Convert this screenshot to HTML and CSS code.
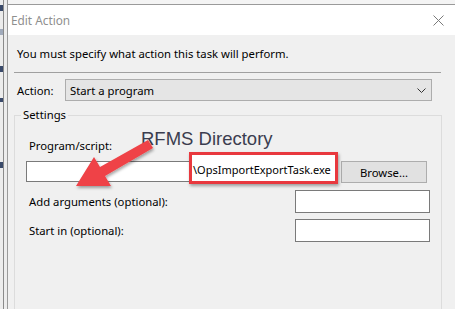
FILE: index.html
```html
<!DOCTYPE html>
<html lang="en">
<head>
  <meta charset="UTF-8" />
  <title>Edit Action</title>
  <link rel="stylesheet" href="styles.css">
</head>
<body>
  <div class="screen">
    <div class="backdrop">
      <i class="mark m1"></i>
      <i class="mark m2"></i>
      <i class="mark m3"></i>
      <i class="mark m4"></i>
      <i class="mark m5"></i>
    </div>

    <div class="dialog">
      <div class="titlebar">
        <span class="title">Edit Action</span>
        <svg class="close" width="11" height="11" viewBox="0 0 11 11">
          <path d="M0.5 0.5 L10.5 10.5 M10.5 0.5 L0.5 10.5" stroke="#7a7a7a" stroke-width="1" fill="none" />
        </svg>
      </div>

      <div class="dialog-body">
        <p class="intro">You must specify what action this task will perform.</p>
        <div class="separator"></div>

        <div class="action-row">
          <label class="action-label">Action:</label>
          <div class="combo">
            <span>Start a program</span>
            <svg width="9" height="5" viewBox="0 0 9 5">
              <path d="M0.5 0.5 L4.5 4.5 L8.5 0.5" stroke="#333" stroke-width="1" fill="none" />
            </svg>
          </div>
        </div>

        <fieldset class="settings">
          <legend>Settings</legend>
          <label class="field-label prog-label">Program/script:</label>
          <div class="prog-row">
            <input type="text" class="prog-input" />
            <button class="browse">Browse...</button>
          </div>
          <div class="opt-row">
            <label class="field-label">Add arguments (optional):</label>
            <input type="text" class="opt-input" />
          </div>
          <div class="opt-row">
            <label class="field-label">Start in (optional):</label>
            <input type="text" class="opt-input" />
          </div>
        </fieldset>
      </div>
    </div>

    <!-- annotations drawn over the screenshot -->
    <div class="note-text">RFMS Directory</div>
    <div class="callout">\OpsImportExportTask.exe</div>
    <svg class="arrow" width="455" height="309" viewBox="0 0 455 309">
      <defs>
        <filter id="shadow" x="-20%" y="-20%" width="140%" height="140%">
          <feDropShadow dx="1" dy="2" stdDeviation="1.5" flood-color="#000" flood-opacity="0.35" />
        </filter>
      </defs>
      <polygon filter="url(#shadow)" fill="#ef4247"
        points="153,148 148,140 100,167 94,157 76,186 111,186 105,176" />
    </svg>
  </div>
</body>
</html>
```

FILE: styles.css
```css
* {
  box-sizing: border-box;
}
body {
  margin: 0;
  width: 455px;
  height: 309px;
  overflow: hidden;
  background-color: #f4f4f4;
  font-family: "Noto Sans", sans-serif;
  font-size: 11.3px;
  color: #000;
}
.screen {
  position: relative;
  display: flex;
  width: 455px;
  height: 309px;
  overflow: hidden;
}
.backdrop {
  position: relative;
  width: 8px;
  flex: none;
  background-color: #ececec;
  border-right: 1px solid #9a9a9a;
}
.backdrop::after {
  content: "";
  position: absolute;
  left: 3px;
  top: 0;
  bottom: 0;
  width: 1px;
  background-color: #8a8a8a;
}
.mark {
  position: absolute;
  left: 0;
  width: 3px;
  height: 6px;
  background-color: #3a4a6a;
}
.m1 { top: 5px; }
.m2 { top: 29px; background-color: #a0aabb; }
.m3 { top: 66px; }
.m4 { top: 98px; height: 4px; }
.m5 { top: 162px; }

.dialog {
  margin-top: 4px;
  width: 460px;
  flex: none;
  border-top: 1px solid #9a9a9a;
  background-color: #f0f0f0;
}
.titlebar {
  height: 30px;
  background-color: #fff;
  display: flex;
  align-items: center;
  justify-content: space-between;
  padding: 0 22px 0 3px;
}
.title {
  color: #8f8f8f;
  font-size: 11.8px;
}
.close {
  margin-right: 2px;
}

.dialog-body {
  padding: 0 0 0 6px;
}
.intro {
  margin: 0;
  padding: 11px 0 0 3px;
  line-height: 16px;
}
.separator {
  width: 427px;
  height: 1px;
  margin-top: 10px;
  background-color: #a0a0a0;
}
.action-row {
  display: flex;
  align-items: center;
  margin-top: 6px;
  padding-left: 3px;
}
.action-label {
  width: 48px;
}
.combo {
  width: 367px;
  height: 22px;
  display: flex;
  align-items: center;
  justify-content: space-between;
  padding: 0 5px 0 4px;
  background-color: #e5e5e5;
  border: 1px solid #adadad;
}

.settings {
  width: 428px;
  margin: 6px 0 0 0;
  padding: 0 11px 80px 11px;
  border: 1px solid #dcdcdc;
  min-inline-size: 0;
}
.settings legend {
  margin-left: -5px;
  padding: 0 2px;
  line-height: 16px;
}
.field-label {
  display: block;
  padding-left: 3px;
  line-height: 16px;
}
.prog-label {
  margin-top: 15px;
}
.prog-row {
  display: flex;
  margin-top: 7px;
}
.prog-input {
  width: 310px;
  height: 21px;
  border: 1px solid #7a7a7a;
  background-color: #fff;
  margin: 0;
}
.browse {
  width: 86px;
  height: 22px;
  margin-left: 5px;
  padding: 0;
  background-color: #e1e1e1;
  border: 1px solid #adadad;
  font-family: "Noto Sans", sans-serif;
  font-size: 11.3px;
  color: #000;
}
.opt-row {
  display: flex;
  align-items: center;
  justify-content: space-between;
  margin-top: 7px;
}
.opt-row + .opt-row {
  margin-top: 6px;
}
.opt-input {
  width: 135px;
  height: 23px;
  margin: 0;
  border: 1px solid #7a7a7a;
  background-color: #fff;
}

.note-text {
  position: absolute;
  left: 141px;
  top: 128px;
  font-family: "Liberation Sans", Arial, sans-serif;
  font-size: 18.5px;
  color: #3b3d4f;
}
.callout {
  position: absolute;
  left: 189px;
  top: 152px;
  width: 149px;
  height: 32px;
  padding: 8px 0 0 1px;
  background-color: #fff;
  border: 3px solid #e8383e;
  box-shadow: 1px 2px 3px rgba(0, 0, 0, 0.35);
  font-size: 11px;
  line-height: 14px;
  white-space: nowrap;
  overflow: hidden;
}
.arrow {
  position: absolute;
  left: 0;
  top: 0;
  pointer-events: none;
}
```
